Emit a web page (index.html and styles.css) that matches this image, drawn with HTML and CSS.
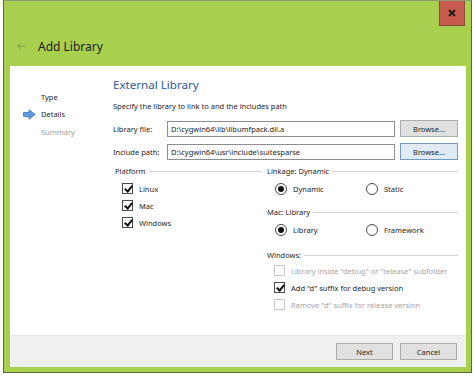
FILE: index.html
```html
<!DOCTYPE html>
<html lang="en">
<head>
    <meta charset="UTF-8">
    <title>Add Library</title>
    <link rel="stylesheet" href="styles.css">
</head>
<body>
    <div class="window">
        <div class="titlebar">
            <button class="close">
                <svg width="8" height="8" viewBox="0 0 8 8"><path d="M1 1L7 7M7 1L1 7" stroke="#1a1a1a" stroke-width="1.8"/></svg>
            </button>
        </div>
        <div class="heading">
            <svg class="back" width="10" height="8" viewBox="0 0 10 8"><path d="M10 4H1.5M4.5 1L1.5 4L4.5 7" fill="none" stroke="#7f9a55" stroke-width="1"/></svg>
            <span class="heading-text">Add Library</span>
        </div>
        <div class="panel">
            <div class="panel-body">
                <ul class="steps">
                    <li class="step"><span class="step-icon"></span>Type</li>
                    <li class="step"><span class="step-icon">
                        <svg width="13" height="11" viewBox="0 0 13 11"><path d="M0.5 3.5H6V0.8L12.3 5.5L6 10.2V7.5H0.5Z" fill="#5b9be0" stroke="#3c76bd" stroke-width="0.8" stroke-linejoin="round"/></svg>
                    </span>Details</li>
                    <li class="step muted"><span class="step-icon"></span>Summary</li>
                </ul>
                <div class="content">
                    <h2>External Library</h2>
                    <p class="desc">Specify the library to link to and the includes path</p>
                    <div class="field-row">
                        <label>Library file:</label>
                        <div class="input">D:\cygwin64\lib\libumfpack.dll.a</div>
                        <button class="btn">Browse...</button>
                    </div>
                    <div class="field-row second">
                        <label>Include path:</label>
                        <div class="input">D:\cygwin64\usr\include\suitesparse</div>
                        <button class="btn focused">Browse...</button>
                    </div>
                    <div class="groups">
                        <div class="group platform">
                            <div class="group-label">Platform</div>
                            <div class="check first"><span class="box on"></span>Linux</div>
                            <div class="check"><span class="box on"></span>Mac</div>
                            <div class="check"><span class="box on"></span>Windows</div>
                        </div>
                        <div class="group options">
                            <div class="group-label">Linkage: Dynamic</div>
                            <div class="radio-row">
                                <div class="radio"><span class="dot on"></span>Dynamic</div>
                                <div class="radio"><span class="dot"></span>Static</div>
                            </div>
                            <div class="group-label mac">Mac: Library</div>
                            <div class="radio-row">
                                <div class="radio"><span class="dot on"></span>Library</div>
                                <div class="radio"><span class="dot"></span>Framework</div>
                            </div>
                            <div class="group-label win">Windows:</div>
                            <div class="check wide first disabled"><span class="box"></span>Library inside "debug" or "release" subfolder</div>
                            <div class="check wide"><span class="box on"></span>Add "d" suffix for debug version</div>
                            <div class="check wide disabled"><span class="box"></span>Remove "d" suffix for release version</div>
                        </div>
                    </div>
                </div>
            </div>
            <div class="panel-footer">
                <button class="btn footer-btn">Next</button>
                <button class="btn footer-btn">Cancel</button>
            </div>
        </div>
    </div>
</body>
</html>
```

FILE: styles.css
```css
body {
    margin: 0;
    background: #fff;
    font-family: "Noto Sans", sans-serif;
    font-size: 7.5px;
    color: #1e1e1e;
}
.window {
    box-sizing: border-box;
    margin-left: 3px;
    width: 469px;
    height: 373px;
    border: 1px solid #56692f;
    border-top-color: #8c9a75;
    background: #a9cf4f;
    padding: 0 5px 5px 6px;
    display: flex;
    flex-direction: column;
}
.titlebar {
    height: 25px;
    display: flex;
    justify-content: flex-end;
}
.close {
    width: 26px;
    height: 25px;
    margin-right: 1px;
    padding: 0;
    border: 1px solid #8a4a3c;
    border-top: none;
    background: #c95a50;
    display: flex;
    align-items: center;
    justify-content: center;
}
.heading {
    height: 40px;
    display: flex;
    align-items: center;
    padding-left: 6px;
}
.back {
    margin-right: 12px;
}
.heading-text {
    font-size: 12px;
    color: #1b1b1b;
}
.panel {
    flex: 1;
    background: #fff;
    display: flex;
    flex-direction: column;
}
.panel-body {
    flex: 1;
    display: flex;
}
.steps {
    width: 103px;
    list-style: none;
    margin: 0;
    padding: 22px 0 0 13px;
    box-sizing: border-box;
}
.step {
    display: flex;
    align-items: center;
    height: 17.5px;
}
.step-icon {
    width: 18px;
    display: flex;
    align-items: center;
}
.muted {
    color: #a0a0a0;
}
.content {
    flex: 1;
    padding: 10px 8px 0 0;
}
h2 {
    margin: 0;
    font-size: 11.6px;
    line-height: 18px;
    font-weight: normal;
    color: #2b5b9c;
}
.desc {
    margin: 5px 0 0;
    line-height: 14px;
}
.field-row {
    display: flex;
    align-items: center;
    height: 17px;
    margin-top: 7px;
}
.field-row.second {
    margin-top: 6px;
}
.field-row label {
    width: 54px;
    white-space: nowrap;
}
.input {
    box-sizing: border-box;
    width: 228px;
    height: 16px;
    border: 1px solid #8a8d92;
    padding-left: 3px;
    line-height: 14px;
    white-space: nowrap;
}
.btn {
    box-sizing: border-box;
    font-family: inherit;
    font-size: 7.5px;
    color: #1e1e1e;
    background: #e1e1e1;
    border: 1px solid #adadad;
    padding: 0;
}
.field-row .btn {
    margin-left: 5px;
    width: 58px;
    height: 17px;
}
.btn.focused {
    background: #e1ebf5;
    border-color: #6f9bc4;
}
.groups {
    display: flex;
    margin-top: 5px;
}
.platform {
    width: 149px;
    margin-right: 5px;
}
.options {
    flex: 1;
}
.group-label {
    display: flex;
    align-items: center;
    height: 12px;
    line-height: 12px;
}
.platform .group-label {
    padding-left: 2px;
}
.group-label::after {
    content: "";
    flex: 1;
    height: 1px;
    background: #d2d2d2;
    margin-left: 3px;
}
.group-label.mac {
    margin-top: 9px;
}
.group-label.win {
    margin-top: 11px;
}
.check {
    display: flex;
    align-items: center;
    height: 17px;
    padding-left: 9px;
    white-space: nowrap;
}
.check.first {
    margin-top: 3px;
}
.check.wide {
    padding-left: 7px;
}
.check.wide.first {
    margin-top: 1px;
}
.box {
    box-sizing: border-box;
    width: 11px;
    height: 11px;
    border: 1px solid #4a4a4a;
    margin-right: 6px;
    position: relative;
}
.box.on::after {
    content: "";
    position: absolute;
    left: 3px;
    top: 0;
    width: 3px;
    height: 6px;
    border: solid #111;
    border-width: 0 2px 2px 0;
    transform: rotate(40deg);
}
.disabled {
    color: #a6a6a6;
}
.disabled .box {
    border-color: #c9c9c9;
}
.radio-row {
    display: flex;
    height: 17px;
    margin-top: 3px;
    padding-left: 8px;
}
.radio {
    width: 91px;
    display: flex;
    align-items: center;
}
.dot {
    box-sizing: border-box;
    width: 12px;
    height: 12px;
    border: 1px solid #4a4a4a;
    border-radius: 50%;
    margin-right: 6px;
    display: flex;
    align-items: center;
    justify-content: center;
}
.dot.on::after {
    content: "";
    width: 6px;
    height: 6px;
    border-radius: 50%;
    background: #111;
}
.panel-footer {
    box-sizing: border-box;
    height: 32px;
    background: #f0f0f0;
    border-top: 1px solid #e4e4e4;
    display: flex;
    justify-content: flex-end;
    align-items: center;
    gap: 7px;
    padding-right: 9px;
}
.footer-btn {
    width: 57px;
    height: 17px;
}
```
